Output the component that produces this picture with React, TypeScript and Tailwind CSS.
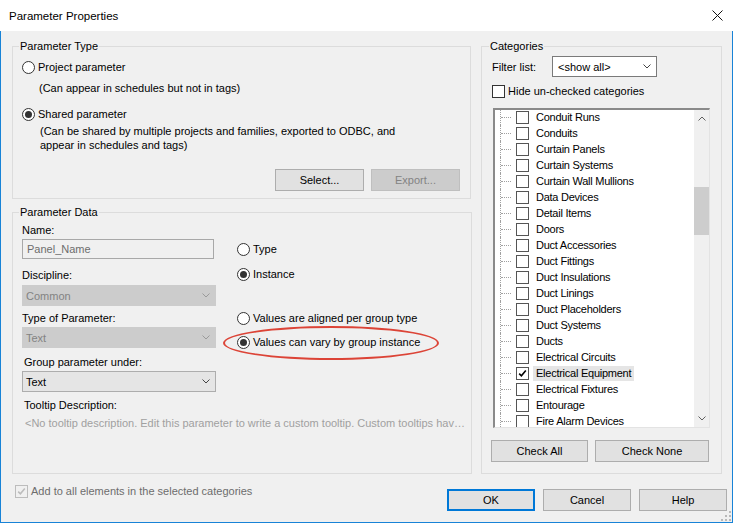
import React from 'react';

const categories = [
  'Conduit Runs',
  'Conduits',
  'Curtain Panels',
  'Curtain Systems',
  'Curtain Wall Mullions',
  'Data Devices',
  'Detail Items',
  'Doors',
  'Duct Accessories',
  'Duct Fittings',
  'Duct Insulations',
  'Duct Linings',
  'Duct Placeholders',
  'Duct Systems',
  'Ducts',
  'Electrical Circuits',
  'Electrical Equipment',
  'Electrical Fixtures',
  'Entourage',
  'Fire Alarm Devices',
];

const Radio = ({ checked }: { checked?: boolean }) => (
  <span className="flex h-[13px] w-[13px] shrink-0 items-center justify-center rounded-full border border-[#333333] bg-white">
    {checked && <span className="h-[7px] w-[7px] rounded-full bg-[#333333]" />}
  </span>
);

const RadioRow = ({ label, checked, className = '' }: { label: string; checked?: boolean; className?: string }) => (
  <div className={`flex h-4 items-center gap-[3px] ${className}`}>
    <Radio checked={checked} />
    <span>{label}</span>
  </div>
);

const Chevron = ({ color = '#555555', up = false }: { color?: string; up?: boolean }) => (
  <svg width="8" height="5" viewBox="0 0 8 5" className="shrink-0">
    <path d={up ? 'M0.5 4.5 L4 1 L7.5 4.5' : 'M0.5 0.5 L4 4 L7.5 0.5'} fill="none" stroke={color} strokeWidth="1" />
  </svg>
);

const Check = ({ color = '#000000' }: { color?: string }) => (
  <svg width="9" height="9" viewBox="0 0 9 9">
    <path d="M1.2 4.6 L3.4 6.8 L7.8 1.6" fill="none" stroke={color} strokeWidth="1.6" />
  </svg>
);

const Button = ({
  children,
  className = '',
  disabled,
  primary,
}: {
  children: React.ReactNode;
  className?: string;
  disabled?: boolean;
  primary?: boolean;
}) => (
  <button
    className={`flex h-[22px] items-center justify-center ${
      disabled
        ? 'border border-[#bfbfbf] bg-[#cccccc] text-[#838383]'
        : primary
          ? 'border-2 border-[#0078d7] bg-[#e1e1e1]'
          : 'border border-[#adadad] bg-[#e1e1e1]'
    } ${className}`}
  >
    {children}
  </button>
);

const Select = ({ value, disabled }: { value: string; disabled?: boolean }) => (
  <div
    className={`flex h-[21px] w-[194px] items-center justify-between border pl-[3px] pr-[5px] ${
      disabled ? 'border-[#cccccc] bg-[#cccccc] text-[#838383]' : 'border-[#adadad] bg-[#e5e5e5]'
    }`}
  >
    <span>{value}</span>
    <Chevron color={disabled ? '#9a9a9a' : '#444444'} />
  </div>
);

const ParameterType = () => (
  <fieldset className="h-[160px] border border-[#dcdcdc] pl-[9px] pr-[10px]">
    <legend className="ml-[-3px] px-[1px] leading-[14px]">Parameter Type</legend>
    <div className="mt-[6px] flex flex-col">
      <RadioRow label="Project parameter" />
      <p className="ml-[17px] mt-[6px]">(Can appear in schedules but not in tags)</p>
      <RadioRow className="mt-[11px]" label="Shared parameter" checked />
      <p className="ml-[18px] mt-[2px]">
        (Can be shared by multiple projects and families, exported to ODBC, and
        <br />
        appear in schedules and tags)
      </p>
      <div className="mt-[17px] flex justify-end gap-[7px]">
        <Button className="w-[89px]">Select...</Button>
        <Button className="w-[89px]" disabled>
          Export...
        </Button>
      </div>
    </div>
  </fieldset>
);

const ParameterData = () => (
  <fieldset className="h-[269px] border border-[#dcdcdc] pl-[9px] pr-[6px]">
    <legend className="ml-[-3px] px-[1px] leading-[14px]">Parameter Data</legend>
    <div className="flex">
      <div className="flex w-[194px] flex-col">
        <span className="mt-[4px]">Name:</span>
        <div className="mt-[2px] flex h-[20px] w-[192px] items-center border border-[#a8a8a8] bg-[#f0f0f0] px-[4px] text-[#6d6d6d]">
          Panel_Name
        </div>
        <span className="mt-[9px]">Discipline:</span>
        <div className="mt-[3px]">
          <Select value="Common" disabled />
        </div>
        <span className="mt-[5px]">Type of Parameter:</span>
        <div className="mt-[2px]">
          <Select value="Text" disabled />
        </div>
        <span className="ml-[2px] mt-[7px]">Group parameter under:</span>
        <div className="mt-[2px]">
          <Select value="Text" />
        </div>
      </div>
      <div className="ml-[21px] flex flex-col">
        <RadioRow className="mt-[22px]" label="Type" />
        <RadioRow className="mt-[9px]" label="Instance" checked />
        <RadioRow className="mt-[28px]" label="Values are aligned per group type" />
        <div className="relative mt-[8px]">
          <RadioRow label="Values can vary by group instance" checked />
          <span className="pointer-events-none absolute left-[-14px] top-[-8px] h-[34px] w-[216px] rounded-[50%] border-2 border-[#dc4437]" />
        </div>
      </div>
    </div>
    <div className="ml-[2px] mt-[6px]">Tooltip Description:</div>
    <div className="ml-[3px] mt-[4px] w-[440px] truncate text-[#a0a0a0]">
      &lt;No tooltip description. Edit this parameter to write a custom tooltip. Custom tooltips have a 250 character
      limit.&gt;
    </div>
  </fieldset>
);

const CategoryRow = ({ name, checked }: { name: string; checked?: boolean }) => (
  <div className="flex h-4 shrink-0 items-center">
    <span className="ml-[5px] h-full border-l border-dotted border-[#a0a0a0]" />
    <span className="w-[10px] border-t border-dotted border-[#a0a0a0]" />
    <span className="ml-[5px] flex h-[13px] w-[13px] shrink-0 items-center justify-center border border-[#555555] bg-white">
      {checked && <Check />}
    </span>
    <span className={`ml-[4px] whitespace-nowrap px-[3px] leading-[15px] ${checked ? 'bg-[#e5e5e5]' : ''}`}>{name}</span>
  </div>
);

const Categories = () => (
  <fieldset className="h-[435px] w-[241px] border border-[#dcdcdc] pl-[10px] pr-[11px]">
    <legend className="ml-[-3px] px-[1px] leading-[14px]">Categories</legend>
    <div className="mt-[3px] flex h-[21px] items-center">
      <span className="w-[60px]">Filter list:</span>
      <div className="flex h-[21px] w-[105px] items-center justify-between border border-[#7a7a7a] bg-white pl-[5px] pr-[5px]">
        <span>&lt;show all&gt;</span>
        <Chevron color="#444444" />
      </div>
    </div>
    <div className="mt-[7px] flex h-[14px] items-center gap-[3px]">
      <span className="h-[13px] w-[13px] border border-[#333333] bg-white" />
      <span>Hide un-checked categories</span>
    </div>
    <div className="ml-px mt-[10px] flex h-[320px] w-[217px] border-b border-l-2 border-r border-t-2 border-b-[#e3e3e3] border-l-[#8a8a8a] border-r-[#e3e3e3] border-t-[#8a8a8a] bg-white">
      <div className="flex flex-1 flex-col overflow-hidden text-[11px] tracking-[-0.25px]">
        <div className="-mt-px flex flex-col">
          {categories.map((c) => (
            <CategoryRow key={c} name={c} checked={c === 'Electrical Equipment'} />
          ))}
        </div>
      </div>
      <div className="flex w-[15px] flex-col bg-[#f0f0f0]">
        <div className="flex h-[17px] items-center justify-center">
          <Chevron color="#606060" up />
        </div>
        <div className="flex-1">
          <div className="mt-[60px] h-[48px] bg-[#cdcdcd]" />
        </div>
        <div className="flex h-[17px] items-center justify-center">
          <Chevron color="#606060" />
        </div>
      </div>
    </div>
    <div className="ml-[-1px] mt-[12px] flex gap-[7px]">
      <Button className="w-[97px]">Check All</Button>
      <Button className="w-[114px]">Check None</Button>
    </div>
  </fieldset>
);

const Grip = () => (
  <svg width="10" height="10" viewBox="0 0 10 10" className="absolute bottom-px right-px">
    <rect x="8" y="0" width="2" height="2" fill="#b8b8b8" />
    <rect x="4" y="4" width="2" height="2" fill="#b8b8b8" />
    <rect x="8" y="4" width="2" height="2" fill="#b8b8b8" />
    <rect x="0" y="8" width="2" height="2" fill="#b8b8b8" />
    <rect x="4" y="8" width="2" height="2" fill="#b8b8b8" />
    <rect x="8" y="8" width="2" height="2" fill="#b8b8b8" />
  </svg>
);

export default function App() {
  return (
    <div className="flex h-[523px] w-[733px] flex-col overflow-hidden bg-white font-['Liberation_Sans',Arial,sans-serif] text-[11px] leading-[14px] text-black">
      <div className="flex h-[31px] shrink-0 items-center justify-between bg-white pl-[9px] pr-[10px]">
        <span className="text-[11.5px]">Parameter Properties</span>
        <svg width="11" height="11" viewBox="0 0 11 11">
          <path d="M0.5 0.5 L10.5 10.5 M10.5 0.5 L0.5 10.5" stroke="#111111" strokeWidth="1" />
        </svg>
      </div>

      <div className="relative flex flex-1 flex-col border-x border-b border-[#1883d7] bg-[#f0f0f0] pl-[11px] pr-[10px] pt-[8px]">
        <div className="flex gap-[10px]">
          <div className="flex w-[459px] flex-col gap-[6px]">
            <ParameterType />
            <ParameterData />
          </div>
          <Categories />
        </div>

        <div className="flex items-start justify-between">
          <div className="ml-[3px] mt-[10px] flex items-center gap-[3px] text-[#6d6d6d]">
            <span className="flex h-[13px] w-[13px] items-center justify-center border border-[#bcbcbc]">
              <Check color="#bcbcbc" />
            </span>
            <span>Add to all elements in the selected categories</span>
          </div>
          <div className="mr-[-5px] mt-[15px] flex gap-[8px]">
            <Button className="w-[88px]" primary>
              OK
            </Button>
            <Button className="w-[88px]">Cancel</Button>
            <Button className="w-[88px]">Help</Button>
          </div>
        </div>

        <Grip />
      </div>
    </div>
  );
}
